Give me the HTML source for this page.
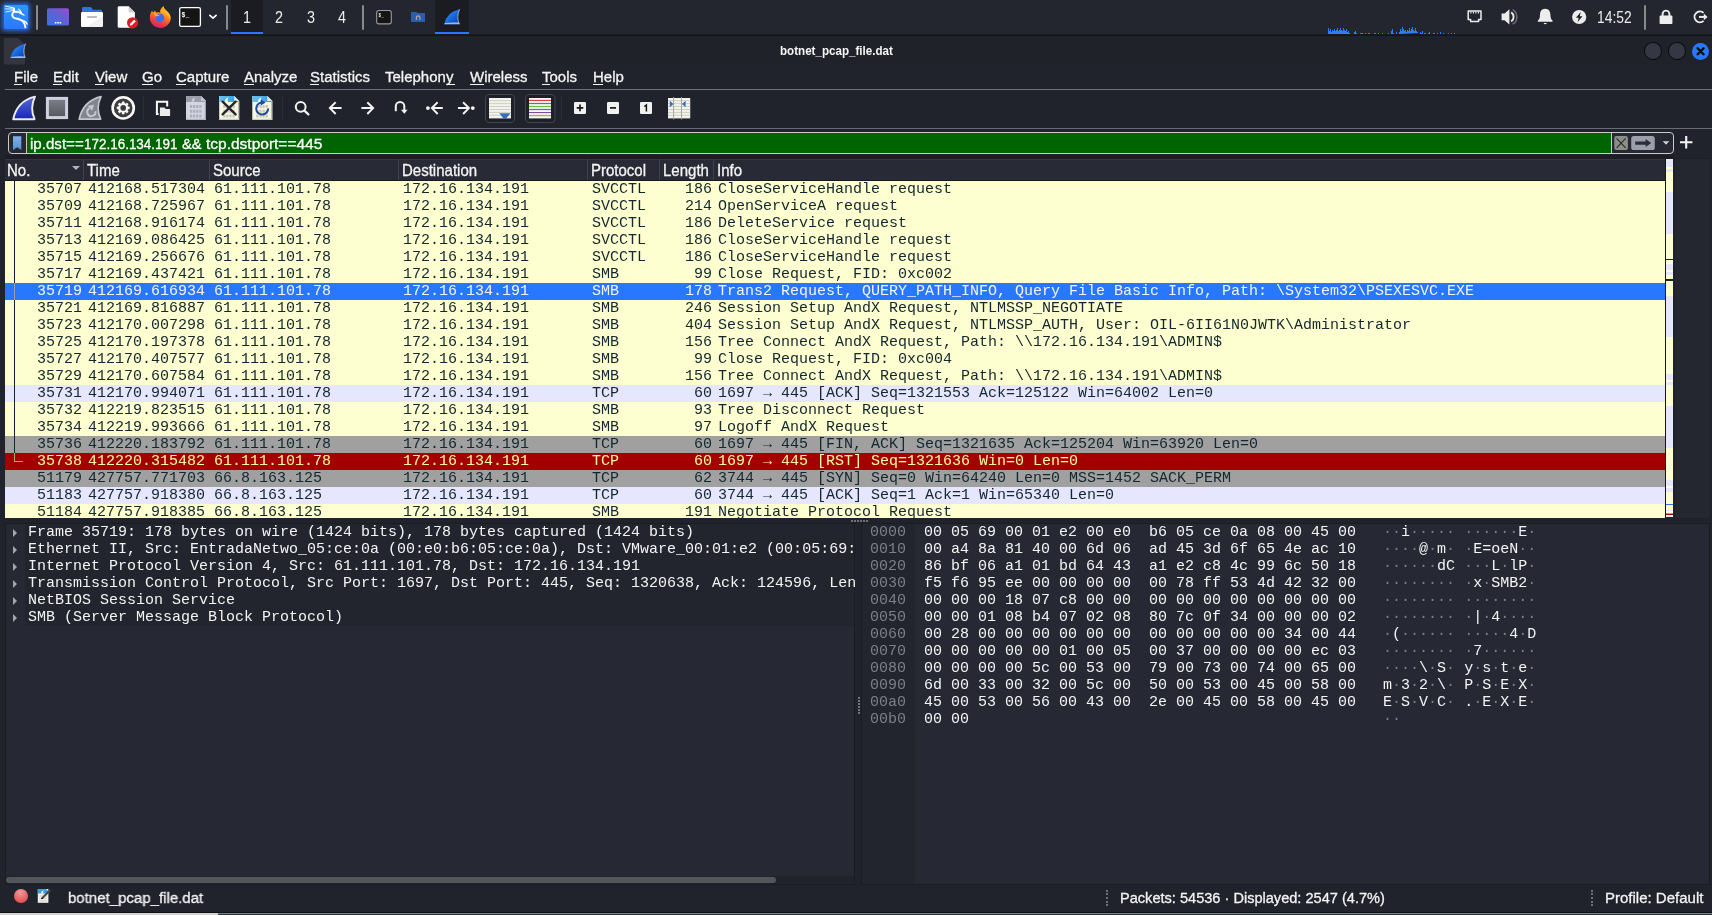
<!DOCTYPE html>
<html><head><meta charset="utf-8"><title>botnet_pcap_file.dat</title>
<style>
*{box-sizing:border-box}
html,body{margin:0;padding:0}
body{width:1712px;height:915px;position:relative;overflow:hidden;background:#21232c;
 font-family:"Liberation Sans",sans-serif;font-size:15px;color:#f2f2f2}
#root{position:absolute;left:0;top:0;width:1712px;height:915px;will-change:transform}
.abs{position:absolute}
svg{position:absolute;overflow:visible}
/* ---- top panel ---- */
#panel{position:absolute;left:0;top:0;width:1712px;height:35px;background:#24262f}
#panelline{position:absolute;left:0;top:34px;width:1712px;height:2px;background:linear-gradient(180deg,#1b1c22,#121318)}
.psep{position:absolute;top:5px;width:2px;height:25px;background:#8a8a8a;border-radius:1px}
.ws{position:absolute;top:8px;height:19px;line-height:19px;font-size:16.7px;color:#ececec;transform:scaleX(.86);transform-origin:0 0}
/* ---- title ---- */
#titlebar{position:absolute;left:0;top:36px;width:1712px;height:29px;background:#20222a}
#title{position:absolute;left:780px;top:8px;font-size:12.7px;font-weight:bold;color:#f6f6f6;line-height:14px;white-space:pre;transform:scaleX(.915);transform-origin:0 0}
/* ---- menubar ---- */
#menubar{position:absolute;left:0;top:65px;width:1712px;height:24px;background:#21232c}
.u{position:absolute;-webkit-text-stroke:.3px currentColor;font-size:15.5px;line-height:18px;height:18px;white-space:pre;color:#f4f4f4;transform:scaleX(.968);transform-origin:0 0}
#menubar .u{top:3px}
#menubar i{position:absolute;top:19px;height:1px;background:#f4f4f4}
#menuline{position:absolute;left:5px;top:89px;width:1707px;height:1px;background:#6e7078}
/* ---- toolbar ---- */
#toolbar{position:absolute;left:0;top:0;width:0;height:0}
#toolline{position:absolute;left:5px;top:128px;width:1707px;height:1px;background:#6a6c75}
/* ---- filter ---- */
#filter{position:absolute;left:8px;top:132px;width:1666px;height:22px;border:1px solid #c9c9c9;border-radius:4px;background:#262833;overflow:hidden}
#fgreen{position:absolute;left:18px;top:0;width:1584px;height:20px;background:#006400}
.ft{top:2px;color:#fff}
/* ---- packet list ---- */
#phead{position:absolute;left:5px;top:159px;width:1660px;height:22px;background:#282a35;box-shadow:inset 0 1px 0 #343641,inset 0 -1px 0 #181920}
#phead .u{top:3px;font-size:15.8px;transform:scaleX(.95)}
#prestrip{position:absolute;left:5px;top:155px;width:1669px;height:4px;background:#1d1e25}
#phead i{position:absolute;top:0;width:1px;height:21px;background:#40424d}
#plist{position:absolute;left:5px;top:181px;width:1660px;height:337px;overflow:hidden;background:#feffd0;
 font-family:"Liberation Mono",monospace;font-size:15px}
.row{position:absolute;left:0;width:1661px;height:17px;line-height:17px;white-space:pre;color:#12272e}
.row.y{background:#feffd0}
.row.l{background:#e7e6ff}
.row.g{background:#a0a0a0}
.row.r{background:#a40000;color:#fffc9c}
.row.s{background:#2777ff;color:#f4f4f4}
.c{position:absolute;top:0}
.no{left:0;width:77px;text-align:right}
.tm{left:83px}.sr{left:209px}.ds{left:398px}.pr{left:587px}
.ln{left:654px;width:53px;text-align:right}
.inf{left:713px}
#minimap{position:absolute;left:1666px;top:159px;width:7px;height:358px}
#mmline{position:absolute;left:1665px;top:159px;width:1px;height:359px;background:#14161c}
.sortarr{position:absolute;left:67px;top:7px;width:0;height:0;border-left:4px solid transparent;border-right:4px solid transparent;border-top:4.5px solid #b4b4b8}
/* ---- details ---- */
#details{position:absolute;left:5px;top:523px;width:850px;height:362px;background:#262833;box-shadow:inset 0 0 0 1px #1c1d24;overflow:hidden;
 font-family:"Liberation Mono",monospace;font-size:15px;color:#f4f4f4}
#dband{position:absolute;left:20px;top:1px;width:829px;height:102px;background:#22242e}
.drow{position:absolute;left:0;width:1000px;height:17px;line-height:17px;white-space:pre}
.drow span{position:absolute;left:23px;top:1px}
.tri{position:absolute;left:8px;top:5.7px;width:0;height:0;border-left:4.6px solid #a3a5ab;border-top:4px solid transparent;border-bottom:4px solid transparent}
#dtrack{position:absolute;left:1px;top:353px;width:848px;height:8px;background:#21232c}
#dscroll{position:absolute;left:1px;top:354px;width:770px;height:6px;border-radius:3px;background:#54555b}
/* ---- hex ---- */
#hex{position:absolute;left:861px;top:523px;width:849px;height:362px;background:#262833;box-shadow:inset 0 0 0 1px #1c1d24;overflow:hidden;
 font-family:"Liberation Mono",monospace;font-size:15px;color:#f4f4f4}
#hoffbg{position:absolute;left:1px;top:1px;width:53px;height:360px;background:#22242e}
.hrow{position:absolute;left:0;width:849px;height:17px;line-height:17px;white-space:pre}
.hrow span{position:absolute;top:1px}
.off{left:9px;color:#7d7f87}
.hx{left:63px}
.as{left:522px}
.as b{font-weight:normal;color:#7d7f87}
/* ---- status ---- */
#status{position:absolute;left:0;top:885px;width:1712px;height:27px}
#status .u{top:4px}
.dots{position:absolute;top:5px;width:0;height:16px;border-left:2px dotted #6d6f78}
#bottomstrip{position:absolute;left:0;top:912px;width:1712px;height:3px;background:#4b5659}

.hdots{position:absolute;left:851px;top:520px;width:17px;height:2px;background:repeating-linear-gradient(90deg,#70727a 0,#70727a 2px,transparent 2px,transparent 3px)}
.vdots{position:absolute;left:858px;top:697px;width:2px;height:17px;background:repeating-linear-gradient(180deg,#70727a 0,#70727a 2px,transparent 2px,transparent 3px)}
#rbox{position:absolute;left:1674px;top:158px;width:37px;height:361px;background:#242630;box-shadow:inset 0 0 0 1px #1e1f27}

</style></head>
<body><div id="root">
<div id="panel">
 <div class="abs" style="left:231px;top:0;width:32px;height:34px;background:#1b1c21"></div>
 <div class="abs" style="left:231px;top:32px;width:32px;height:2px;background:#2777ff"></div>
 <div class="abs" style="left:435px;top:0;width:34px;height:34px;background:#1b1c21"></div>
 <div class="abs" style="left:435px;top:32px;width:34px;height:2px;background:#2777ff"></div>
 <div class="abs" id="kali" style="left:4px;top:4.8px;width:24px;height:24px;border-radius:1.5px;background:linear-gradient(180deg,#2b98ff,#2a78ff);box-shadow:0 0 4px 2px rgba(39,119,255,.85)"></div>
 <div class="psep" style="left:36px"></div>
 <div class="psep" style="left:226px"></div>
 <div class="psep" style="left:362px"></div>
 <div class="ws" style="left:243px">1</div><div class="ws" style="left:274.5px">2</div>
 <div class="ws" style="left:306.5px">3</div><div class="ws" style="left:338px">4</div>
 <div class="abs" style="left:1597px;top:8.6px;height:18px;line-height:18px;font-size:16px;color:#ececec;white-space:pre;transform:scaleX(.865);transform-origin:0 0">14:52</div>
 <div class="psep" style="left:1644px;top:5px;height:25px"></div>
<svg style="left:0;top:0" width="1712" height="35" viewBox="0 0 1712 35">
<defs>
<linearGradient id="gdesk" x1="0" y1="1" x2="1" y2="0"><stop offset="0" stop-color="#3574e6"/><stop offset=".5" stop-color="#5b62d6"/><stop offset="1" stop-color="#9a4fc6"/></linearGradient>
<linearGradient id="gff" x1=".7" y1="0" x2=".3" y2="1"><stop offset="0" stop-color="#ffd43a"/><stop offset=".4" stop-color="#ff8a1e"/><stop offset=".75" stop-color="#f4383c"/><stop offset="1" stop-color="#d2207c"/></linearGradient>
<linearGradient id="gff2" x1="0" y1="0" x2="1" y2="1"><stop offset="0" stop-color="#ff9a1e"/><stop offset="1" stop-color="#ffcb30"/></linearGradient>
<linearGradient id="gglobe" x1="0" y1="0" x2="1" y2="1"><stop offset="0" stop-color="#7a54e0"/><stop offset=".5" stop-color="#3a6df0"/><stop offset="1" stop-color="#2c7cf4"/></linearGradient>
<linearGradient id="gwsf" x1="0" y1="0" x2="1" y2="1"><stop offset="0" stop-color="#3c9cf6"/><stop offset=".6" stop-color="#1560d8"/><stop offset="1" stop-color="#0a3aa4"/></linearGradient>
<linearGradient id="gfold" x1="0" y1="0" x2="1" y2="1"><stop offset="0" stop-color="#fff"/><stop offset=".62" stop-color="#fff"/><stop offset=".63" stop-color="#efefef"/><stop offset="1" stop-color="#f4f4f4"/></linearGradient>
</defs>
<!-- kali dragon -->
<g fill="#fff"><path d="M14.2,7.5 L4.6,5.5 L4.7,6.3 L13.8,8.5 Z"/><path d="M13.8,8.6 L4.8,8.5 L4.9,9.3 L13.7,9.5 Z"/><path d="M13.9,9.7 L5.3,11.7 L5.7,12.4 L14.3,10.6 Z"/>
<path d="M14,11.5 C16,10.3 19,10.7 21,12.3 L25.3,15.5 C23.4,15.9 21.6,15.1 20.4,14.1 C18.6,12.9 16.2,12.5 14.4,13.1 Z"/></g>
<g fill="none" stroke="#fff" stroke-linecap="round">
<path d="M13.9,8.6 C14.7,10.2 14.4,11.2 13.2,12.4 C11.2,14.6 12.2,17.6 15.4,18.4 C18.6,19 21.4,19.4 23.2,21.6 C24.6,23.4 25.2,25.4 25.4,27.4" stroke-width="1.9"/>
<path d="M22.6,20.6 C24.8,21 26.6,22.4 27.3,24.3" stroke-width="1.1"/>
<path d="M18.4,9.1 L20.2,10.6 L21.4,12.6" stroke-width="1.2"/>
</g>
<!-- show desktop -->
<rect x="47" y="8.3" width="22" height="17.3" rx="1.6" fill="url(#gdesk)"/>
<g fill="#fff"><rect x="54.8" y="22" width="1.6" height="1.5"/><rect x="57.2" y="22" width="1.6" height="1.5"/><rect x="59.6" y="22" width="1.6" height="1.5"/></g>
<!-- file manager -->
<path d="M82,8.4 Q82,7 83.4,7 H90.2 Q91.2,7 91.8,8 L92.8,9.8 H100.6 Q102,9.8 102,11.2 V14 H82 Z" fill="#2d74e2"/>
<rect x="81" y="12" width="22" height="15" rx="1.2" fill="url(#gfold)"/>
<rect x="86.8" y="16" width="10.4" height="2" rx="1" fill="#bdbdbd"/>
<!-- text editor -->
<path d="M119,6.2 H128.6 L134.9,12.6 V26.4 Q134.9,27.7 133.6,27.7 H119 Q117.7,27.7 117.7,26.4 V7.5 Q117.7,6.2 119,6.2 Z" fill="#fff"/>
<path d="M128.6,6.2 L134.9,12.6 H129.8 Q128.6,12.6 128.6,11.4 Z" fill="#cfcfcf"/>
<circle cx="132.6" cy="22.8" r="5.6" fill="#d81f26"/>
<path d="M129.9,25.6 L130.3,23.6 L134.2,19.7 L135.8,21.3 L131.9,25.2 Z" fill="#fff"/>
<!-- firefox -->
<path d="M160.2,27.9 C154.4,27.9 149.8,23.4 149.8,17.6 C149.8,14.6 150.8,12.2 152.2,10.6 C152.3,11.6 152.8,12.4 153.2,12.8 C153.6,11.6 154.4,10.8 155.2,10.4 C155.2,11.2 155.6,12 156.2,12.4 C158.2,12 160,12.4 160.4,12.6 C159.8,10.2 161.4,7.8 163.6,6.2 C163.6,8.4 165.4,9.6 167,11.2 C169.4,13.4 170.8,15.4 170.8,18 C170.6,23.6 166,27.9 160.2,27.9 Z" fill="url(#gff)"/>
<path d="M160.4,12.6 C159.8,10.2 161.4,7.8 163.6,6.2 C163.6,8.4 165.4,9.6 167,11.2 C169.6,13.6 170.6,16.4 170,19.6 C169.4,16.2 166.4,13 160.4,12.6 Z" fill="url(#gff2)" opacity=".9"/>
<circle cx="160" cy="17.9" r="4.3" fill="url(#gglobe)"/>
<path d="M152.8,12.4 C154.8,12.8 156.4,13.2 157.4,14.8 C158.2,15.2 159.6,15 160.2,14.6 C159.2,16.2 157.2,16.6 155.8,16 C154.6,15.2 153.6,14 152.8,12.4 Z" fill="#ffb52a"/>
<!-- terminal -->
<rect x="179.7" y="7.7" width="20.7" height="18.7" rx="1.6" fill="#141414" stroke="#fff" stroke-width="1.3"/>
<text transform="translate(181.6,16.7) scale(.8,1)" font-family="Liberation Mono" font-weight="bold" font-size="8" fill="#fff">$_</text>
<!-- chevron -->
<path d="M209.9,15.3 L213,18.2 L216.1,15.3" fill="none" stroke="#fff" stroke-width="1.7" stroke-linecap="round" stroke-linejoin="round"/>
<!-- small terminal -->
<rect x="376.7" y="10.5" width="14.6" height="13.4" rx="2.2" fill="#151515" stroke="#9c9c9c" stroke-width="1.1"/>
<text transform="translate(378.6,16.8) scale(.8,1)" font-family="Liberation Mono" font-weight="bold" font-size="5.4" fill="#eee">$_</text>
<!-- small folder -->
<path d="M411,12.6 Q411,12 411.6,12 H416.6 L417.6,13 H424.4 Q425,13 425,13.6 V21.4 Q425,22 424.4,22 H411.6 Q411,22 411,21.4 Z" fill="#2c5cac"/>
<path d="M415.8,20 V17.6 A2.4,2.4 0 0 1 420.6,17.6 V20 H419.3 V17.8 A1.1,1.1 0 0 0 417.1,17.8 V20 Z" fill="#a8a29c"/>
<!-- wireshark task -->
<path d="M444.2,24.2 Q446.6,12 459.6,9.2 Q456,17 459.4,24.2 Z" fill="url(#gwsf)"/>
<path d="M444.2,24.2 L459.4,24.2 L458.9,22.6 Q451,22.2 445,23 Z" fill="#9ecbf6" opacity=".9"/>
<path d="M459.6,9.2 Q456,17 459.4,24.2" fill="none" stroke="#c7d5ea" stroke-width=".7"/>
<!-- tray: network -->
<path d="M1468.2,11 H1481 V19.6 H1478.6 V21.6 H1470.6 V19.6 H1468.2 Z" fill="none" stroke="#ededed" stroke-width="1.5" stroke-linejoin="round"/>
<path d="M1470.9,11.6 V13.6 M1473.4,11.6 V13.6 M1475.9,11.6 V13.6 M1478.4,11.6 V13.6" stroke="#ededed" stroke-width="1.1"/>
<!-- speaker -->
<path d="M1501.6,13.6 H1504.6 L1509.4,9.2 V24.6 L1504.6,20.2 H1501.6 Z" fill="#ededed"/>
<path d="M1511.2,12.4 A5.4,5.4 0 0 1 1511.2,21.4" fill="none" stroke="#ededed" stroke-width="1.9"/>
<path d="M1512.6,9.6 A8.4,8.4 0 0 1 1512.6,24.2" fill="none" stroke="#6d6f78" stroke-width="1.5"/>
<!-- bell -->
<path d="M1545.2,8.8 C1548.8,8.8 1550.4,11.6 1550.4,14.6 C1550.4,18.4 1551.4,19.8 1552.6,20.8 V21.8 H1537.8 V20.8 C1539,19.8 1540,18.4 1540,14.6 C1540,11.6 1541.6,8.8 1545.2,8.8 Z" fill="#ededed"/>
<path d="M1543.6,23 H1546.8 Q1546.6,24.3 1545.2,24.3 Q1543.8,24.3 1543.6,23 Z" fill="#ededed"/>
<!-- power -->
<circle cx="1579.2" cy="17" r="7.1" fill="#ededed"/>
<path d="M1580.8,12 L1575.9,17.7 H1578.7 L1577.6,22 L1582.5,16.3 H1579.7 Z" fill="#1c1e25"/>
<!-- lock -->
<path d="M1662.6,16 V14 A3.4,3.4 0 0 1 1669.4,14 V16" fill="none" stroke="#ededed" stroke-width="1.9"/>
<rect x="1659.6" y="15.6" width="12.8" height="8.4" rx=".8" fill="#ededed"/>
<!-- logout -->
<path d="M1703.6,12.9 A5.4,5.4 0 1 0 1703.6,20.9" fill="none" stroke="#ededed" stroke-width="1.9"/>
<path d="M1699,16.9 H1704.6" stroke="#ededed" stroke-width="2"/>
<path d="M1703.8,13.6 L1707.6,16.9 L1703.8,20.2 Z" fill="#ededed"/>
</svg>
<!-- net graph -->
<svg style="left:1327px;top:26px" width="130" height="8" viewBox="0 0 130 8">
<path fill="#2d7df6" d="M1,8V2h1v3h1v-2h1v3h1v-2h1v1h1v-2h1v2h1v-1h1v-2h1v3h1v-1h1v-2h1v2h1v1h1v-3h1v2h1v1h1v-2h1v3h1v-1h1v2h1v1h-22z M27,8v-2h1v-1h1v2h1v1z M33,8v-1h3v1z M38,8v-1h1v1z M41,8v-1h2v1z M47,8v-1h2v1z M51,8v-1h1v1z M55,8v-1h1v1z M61,8v-1h1v1z M64,8v-3h1v-2h1v4h1v1z M69,8v-2h1v2z M72,8v-2h1v-3h1v2h1v-4h1v2h1v2h1v-1h1v2h1v-2h1v1h1v-3h1v3h1v-2h1v-2h1v3h1v1h1v-3h1v3h1v1h1v1z M93,8v-2h1v1h1v-2h1v3z M97,8v-1h2v1z M101,8v-1h1v-1h1v2z M106,8v-1h2v1z M110,8v-1h1v1z M113,8v-2h1v2z M116,8v-1h1v1z M121,8v-1h1v1z M124,8v-1h1v1z M127,8v-1h1v1z"/>
</svg>
</div>
<div id="panelline"></div>

<div id="titlebar">
<svg style="left:0;top:0" width="40" height="29" viewBox="0 36 40 29"><defs><linearGradient id="gwsf2" x1="0" y1="0" x2="1" y2="1"><stop offset="0" stop-color="#3c9cf6"/><stop offset=".6" stop-color="#1560d8"/><stop offset="1" stop-color="#0a3aa4"/></linearGradient></defs>
<path d="M5.2,38 H18 L25,45 V63 Q25,64.4 23.6,64.4 H5.2 Q3.8,64.4 3.8,63 V39.4 Q3.8,38 5.2,38 Z" fill="#34353e"/>
<path d="M10.4,58 Q12.6,46.4 25.6,43.6 Q22.2,51 25.2,58 Z" fill="url(#gwsf2)"/>
<path d="M10.4,58 L25.2,58 L24.8,56.5 Q17,56.1 11.2,56.9 Z" fill="#a6cff8" opacity=".9"/>
<path d="M25.6,43.6 Q22.2,51 25.2,58" fill="none" stroke="#c7d5ea" stroke-width=".7"/>
</svg>
 <div id="title">botnet_pcap_file.dat</div>
 <div class="abs" style="left:1644.2px;top:6.1px;width:17.6px;height:17.6px;border-radius:50%;background:#353744;border:1.5px solid #060709"></div>
 <div class="abs" style="left:1668.2px;top:6.1px;width:17.6px;height:17.6px;border-radius:50%;background:#353744;border:1.5px solid #060709"></div>
 <div class="abs" style="left:1691.8px;top:6.5px;width:17.3px;height:17.3px;border-radius:50%;background:#2777ff"></div>
 <svg style="left:1696.1px;top:11.1px" width="9" height="9" viewBox="0 0 9 9"><path d="M1.6,1.3 L7.6,7.3 M7.6,1.3 L1.6,7.3" stroke="#07080a" stroke-width="2.3" stroke-linecap="round"/></svg>
</div>

<div id="menubar">
<span class="u" style="left:14px">File</span><span class="u" style="left:53px">Edit</span><span class="u" style="left:95px">View</span><span class="u" style="left:142px">Go</span><span class="u" style="left:176px">Capture</span><span class="u" style="left:244px">Analyze</span><span class="u" style="left:310px">Statistics</span><span class="u" style="left:385px">Telephony</span><span class="u" style="left:470px">Wireless</span><span class="u" style="left:542px">Tools</span><span class="u" style="left:593px">Help</span>
<i style="left:14px;width:8px"></i><i style="left:53px;width:9px"></i><i style="left:95px;width:9px"></i><i style="left:142px;width:11px"></i><i style="left:176px;width:10px"></i><i style="left:244px;width:10px"></i><i style="left:310px;width:9px"></i><i style="left:447px;width:8px"></i><i style="left:470px;width:14px"></i><i style="left:542px;width:8px"></i><i style="left:593px;width:10px"></i>
</div>
<div id="menuline"></div>

<div id="toolbar">
<svg style="left:0;top:0" width="1712" height="130" viewBox="0 0 1712 130">
<defs>
<linearGradient id="gfin" x1="0" y1="0" x2="0" y2="1"><stop offset="0" stop-color="#5468d4"/><stop offset="1" stop-color="#1a28b4"/></linearGradient>
<linearGradient id="gstop" x1="0" y1="0" x2="0" y2="1"><stop offset="0" stop-color="#7e808c"/><stop offset="1" stop-color="#54565e"/></linearGradient>
<linearGradient id="ghdr" x1="0" y1="0" x2="1" y2="0"><stop offset="0" stop-color="#6cc0f0"/><stop offset="1" stop-color="#2a9ae0"/></linearGradient>
</defs>
<!-- 1 start capture fin -->
<path d="M13.2,119.2 Q17,101 35,96.6 Q29.5,108 34.6,119.2 Z" fill="url(#gfin)" stroke="#ececf0" stroke-width="1.9" stroke-linejoin="round"/>
<!-- 2 stop -->
<rect x="47.4" y="98.4" width="19.2" height="19.2" fill="url(#gstop)" stroke="#cfd1de" stroke-width="3"/>
<!-- 3 restart fin -->
<path d="M79.2,119.2 Q83,101 101,96.6 Q95.5,108 100.6,119.2 Z" fill="#82848e" stroke="#c2c4ce" stroke-width="1.7" stroke-linejoin="round"/>
<path d="M89.4,108.4 A4.1,4.1 0 1 0 95.4,111.2" fill="none" stroke="#c6c8d2" stroke-width="2"/>
<path d="M87.6,106 L94,104.8 L92.2,110.8 Z" fill="#c6c8d2"/>
<!-- 4 options gear -->
<circle cx="123.2" cy="107.9" r="10.6" fill="#3e3e3e" stroke="#fafafa" stroke-width="2.6"/>
<g fill="#fafafa"><circle cx="123.2" cy="107.9" r="4.9"/>
<g id="teeth"><rect x="121.9" y="101.5" width="2.6" height="12.8" rx=".6"/><rect x="121.9" y="101.5" width="2.6" height="12.8" rx=".6" transform="rotate(45 123.2 107.9)"/><rect x="121.9" y="101.5" width="2.6" height="12.8" rx=".6" transform="rotate(90 123.2 107.9)"/><rect x="121.9" y="101.5" width="2.6" height="12.8" rx=".6" transform="rotate(135 123.2 107.9)"/></g></g>
<circle cx="123.2" cy="107.9" r="2.8" fill="#3a3a3a"/>
<!-- sep -->
<rect x="143" y="96" width="1" height="24" fill="#2b2d37"/>
<!-- 5 open/copy folder -->
<path d="M167.2,106.4 V101.7 H156.9 V113.9 H158.6" fill="none" stroke="#fbfbfb" stroke-width="2"/>
<path d="M159.9,107.6 H164.4 L165.9,109.1 H170.1 V116.1 H159.9 Z" fill="#ececec"/>
<!-- 6 save (disabled gray file) -->
<path d="M186,96 H201 L206,101 V119.8 H186 Z" fill="#d3d5e2"/>
<path d="M186,96 H201 L206,101 V102 H186 Z" fill="#9b9da9"/>
<path d="M201,96 L206,101 H201 Z" fill="#c3c5d0"/>
<path d="M191.5,101.5 Q192,98 195,97.4 Q193.8,99.5 194.6,101.8 Z" fill="#c9cbd6"/>
<g stroke="#a3a5b2" stroke-width="3" stroke-dasharray="2.2 .9" opacity=".8"><path d="M190,106.5 H202 M190,111.2 H202 M190,115.9 H202"/></g>
<rect x="204.8" y="101" width="1.2" height="18.8" fill="#9fa1ad"/><rect x="186" y="118.8" width="20" height="1" fill="#b6b8c4"/>
<!-- 7 close file -->
<path d="M219.2,96 H234.2 L239.2,101 V119.8 H219.2 Z" fill="#f6f6e4"/>
<path d="M219.2,96 H234.2 L239.2,101 V102 H219.2 Z" fill="url(#ghdr)"/>
<path d="M234.2,96 L239.2,101 H234.2 Z" fill="#e9e9dc"/>
<path d="M224.7,101.8 Q225.2,98 228.4,97.4 Q227,99.6 227.8,102 Z" fill="#fff"/>
<g stroke="#b4b4a4" stroke-width="3" stroke-dasharray="2.2 .9" opacity=".7"><path d="M223.2,106.5 H235.2 M223.2,111.2 H235.2 M223.2,115.9 H235.2"/></g>
<rect x="238" y="101" width="1.2" height="18.8" fill="#b9b9a6"/><rect x="219.2" y="118.8" width="20" height="1" fill="#d0d0bc"/>
<path d="M222.6,101.6 L235.6,114.4 M235.6,101.6 L222.6,114.4" stroke="#23252b" stroke-width="2.3" stroke-linecap="round"/>
<!-- 8 reload file -->
<path d="M252.3,96 H267.3 L272.3,101 V119.8 H252.3 Z" fill="#f6f6e4"/>
<path d="M252.3,96 H267.3 L272.3,101 V102 H252.3 Z" fill="url(#ghdr)"/>
<path d="M267.3,96 L272.3,101 H267.3 Z" fill="#e9e9dc"/>
<path d="M257.8,101.8 Q258.3,98 261.5,97.4 Q260.1,99.6 260.9,102 Z" fill="#fff"/>
<g stroke="#b4b4a4" stroke-width="3" stroke-dasharray="2.2 .9" opacity=".7"><path d="M256.3,106.5 H268.3 M256.3,111.2 H268.3 M256.3,115.9 H268.3"/></g>
<rect x="271.1" y="101" width="1.2" height="18.8" fill="#b9b9a6"/><rect x="252.3" y="118.8" width="20" height="1" fill="#d0d0bc"/>
<path d="M268.2,108.6 A6,6 0 1 1 261.6,102.6" fill="none" stroke="#1d4a9c" stroke-width="2"/>
<path d="M260.8,99.6 L265.6,102.4 L260.8,105.4 Z" fill="#1d4a9c"/>
<!-- sep -->
<rect x="282" y="96" width="1" height="24" fill="#2b2d37"/>
<!-- 9 find -->
<circle cx="300.7" cy="106.8" r="4.9" fill="none" stroke="#f3f3f3" stroke-width="2"/>
<path d="M304.4,110.6 L308.4,114.4" stroke="#f3f3f3" stroke-width="2.2" stroke-linecap="round"/>
<!-- 10 back -->
<path d="M340.6,108.1 H330.8 M335,102.9 L329.9,108.1 L335,113.3" fill="none" stroke="#f3f3f3" stroke-width="2" stroke-linecap="square" stroke-linejoin="miter"/>
<!-- 11 forward -->
<path d="M362.4,108.1 H372.2 M368,102.9 L373.1,108.1 L368,113.3" fill="none" stroke="#f3f3f3" stroke-width="2" stroke-linecap="square"/>
<!-- 12 goto -->
<path d="M395.8,111.2 V106.3 A4.25,4.25 0 0 1 404.3,106.3 V110.6" fill="none" stroke="#f3f3f3" stroke-width="2"/>
<path d="M401,109.8 H407.6 L404.3,113.8 Z" fill="#f3f3f3"/>
<!-- 13 first -->
<circle cx="427.9" cy="108.1" r="1.9" fill="#f3f3f3"/>
<path d="M441.8,108.1 H432.8 M437,102.9 L431.9,108.1 L437,113.3" fill="none" stroke="#f3f3f3" stroke-width="2" stroke-linecap="square"/>
<!-- 14 last -->
<circle cx="472.8" cy="108.1" r="1.9" fill="#f3f3f3"/>
<path d="M459,108.1 H468 M463.8,102.9 L468.9,108.1 L463.8,113.3" fill="none" stroke="#f3f3f3" stroke-width="2" stroke-linecap="square"/>
<!-- 15 autoscroll (checked) -->
<rect x="485.5" y="94.5" width="29" height="28" rx="3.5" fill="#1e2028" stroke="#41434e"/>
<rect x="489" y="98" width="22" height="20.4" fill="#f3f3ee"/>
<g fill="#c9c9bb"><rect x="489" y="100.3" width="22" height=".9"/><rect x="489" y="103.2" width="22" height=".9"/><rect x="489" y="106.1" width="22" height=".9"/><rect x="489" y="109" width="22" height=".9"/><rect x="489" y="111.9" width="22" height=".9"/><rect x="489" y="114.8" width="22" height=".9"/></g>
<path d="M499.2,113.2 H510.4 L506.4,118.2 Q504.8,119.6 503.2,118.2 Z" fill="#3a6fb8"/>
<!-- 16 colorize (checked) -->
<rect x="525.5" y="94.5" width="29.5" height="28" rx="3.5" fill="#1e2028" stroke="#41434e"/>
<rect x="529" y="98" width="22" height="20.4" fill="#f7f7f3"/>
<rect x="529" y="99.9" width="22" height="1.1" fill="#e5383b"/><rect x="529" y="102.9" width="22" height="1.2" fill="#3f78c8"/><rect x="529" y="105.9" width="22" height="1.2" fill="#6cc428"/><rect x="529" y="108.9" width="22" height="1.2" fill="#3f78c8"/><rect x="529" y="112" width="22" height="1.1" fill="#7a4f9c"/><rect x="529" y="114.9" width="22" height="1.3" fill="#c9a31c"/>
<!-- sep -->
<rect x="561" y="96" width="1" height="24" fill="#2b2d37"/>
<!-- 18 zoom in -->
<rect x="574" y="101.9" width="12" height="12" rx="1.2" fill="#f1f1ee"/>
<path d="M580,104.6 V111.2 M576.7,107.9 H583.3" stroke="#16171c" stroke-width="1.7"/>
<!-- 19 zoom out -->
<rect x="607" y="101.9" width="12" height="12" rx="1.2" fill="#f1f1ee"/>
<path d="M610,107.9 H616" stroke="#16171c" stroke-width="1.7"/>
<!-- 20 1:1 -->
<rect x="640" y="101.9" width="12" height="12" rx="1.2" fill="#f1f1ee"/>
<path d="M644.4,106.6 L646.4,105 V111.4" fill="none" stroke="#16171c" stroke-width="1.5"/>
<!-- 21 resize columns -->
<rect x="668" y="98" width="22.2" height="20.4" fill="#f3f3ee"/>
<g fill="#c9c9bb"><rect x="668" y="100.3" width="22.2" height=".9"/><rect x="668" y="103.2" width="22.2" height=".9"/><rect x="668" y="106.1" width="22.2" height=".9"/><rect x="668" y="109" width="22.2" height=".9"/><rect x="668" y="111.9" width="22.2" height=".9"/><rect x="668" y="114.8" width="22.2" height=".9"/></g>
<rect x="673.1" y="97" width="1" height="22.4" fill="#a9a99c"/><rect x="681" y="97" width="1" height="22.4" fill="#a9a99c"/>
<path d="M669.8,100.8 L673.4,104 L669.8,107.2 Z M685.6,100.8 L682,104 L685.6,107.2 Z" fill="#3a6fb8"/>
</svg>
</div>
<div id="toolline"></div>

<div id="filter"><div id="fgreen"></div><div class="abs" style="left:17px;top:0;width:1px;height:21px;background:#c9c9c9"></div><div class="abs" style="left:1602px;top:0;width:1px;height:21px;background:#c9c9c9"></div>
<svg style="left:0;top:0" width="1665" height="21" viewBox="0 0 1665 21"><defs><linearGradient id="gbm" x1="0" y1="0" x2="0" y2="1"><stop offset="0" stop-color="#7fb0ea"/><stop offset="1" stop-color="#5a8fd6"/></linearGradient></defs>
<path d="M4,3.3 H12.3 V17 L8.15,14.2 L4,17 Z" fill="url(#gbm)"/>
<rect x="1605.3" y="3.1" width="13.6" height="14" rx="2" fill="#8e8e86"/>
<path d="M1607.6,5.4 L1616.6,14.8 M1616.6,5.4 L1607.6,14.8" stroke="#2a2c36" stroke-width="1.2"/>
<rect x="1622.2" y="3.1" width="23.6" height="14" rx="2.6" fill="#9c9eab"/>
<path d="M1626.2,8.5 H1636.6 V6.1 L1642.2,10.1 L1636.6,14.1 V11.7 H1626.2 Z" fill="#2a2c38"/>
<path d="M1653.7,8.2 H1660.3 L1657,11.8 Z" fill="#d6d6d6"/>
</svg><div class="u ft" style="left:21px;transform:scaleX(.975)">ip.dst==</div><div class="u ft" style="left:74.6px;transform:scaleX(.868)">172.16.134.191</div><div class="u ft" style="left:172.6px;transform:scaleX(.95)">&amp;&amp;</div><div class="u ft" style="left:197px;transform:scaleX(1)">tcp.dstport==445</div></div>
<svg style="left:1680px;top:136px" width="13" height="13" viewBox="0 0 13 13"><path d="M6.2,0 V12.4 M0,6.2 H12.4" stroke="#f6f6f6" stroke-width="2.1"/></svg>
<div id="prestrip"></div><div id="rbox"></div>
<div id="phead">
<span class="u" style="left:2px">No.</span><span class="u" style="left:82px">Time</span><span class="u" style="left:208px">Source</span><span class="u" style="left:397px">Destination</span><span class="u" style="left:586px">Protocol</span><span class="u" style="left:658px">Length</span><span class="u" style="left:712px">Info</span>
<b class="sortarr"></b><i style="left:78px"></i><i style="left:204px"></i><i style="left:393px"></i><i style="left:582px"></i><i style="left:654px"></i><i style="left:708px"></i>
</div>
<div id="mmline"></div><div id="minimap" style="background:linear-gradient(180deg,#e7e6ff 0.0px,#e7e6ff 7.7px,#feffd0 7.7px,#feffd0 9.7px,#e7e6ff 9.7px,#e7e6ff 12.6px,#feffd0 12.6px,#feffd0 32.8px,#e7e6ff 32.8px,#e7e6ff 74.9px,#feffd0 74.9px,#feffd0 99.6px,#12272e 99.6px,#12272e 100.7px,#feffd0 100.7px,#feffd0 105.0px,#e7e6ff 105.0px,#e7e6ff 111.0px,#feffd0 111.0px,#feffd0 113.0px,#e7e6ff 113.0px,#e7e6ff 115.7px,#feffd0 115.7px,#feffd0 120.0px,#12272e 120.0px,#12272e 122.0px,#feffd0 122.0px,#feffd0 137.0px,#e7e6ff 137.0px,#e7e6ff 178.4px,#feffd0 178.4px,#feffd0 215.4px,#e7e6ff 215.4px,#e7e6ff 221.0px,#feffd0 221.0px,#feffd0 223.5px,#e7e6ff 223.5px,#e7e6ff 226.5px,#feffd0 226.5px,#feffd0 247.0px,#e7e6ff 247.0px,#e7e6ff 288.8px,#feffd0 288.8px,#feffd0 321.0px,#e7e6ff 321.0px,#e7e6ff 326.8px,#feffd0 326.8px,#feffd0 329.0px,#e7e6ff 329.0px,#e7e6ff 333.0px,#feffd0 333.0px,#feffd0 344.8px,#2777ff 344.8px,#2777ff 346.0px,#feffd0 346.0px,#feffd0 351.2px,#e7e6ff 351.2px,#e7e6ff 352.0px,#feffd0 352.0px,#feffd0 354.2px,#a0a0a0 354.2px,#a0a0a0 354.8px,#a40000 354.8px,#a40000 356.0px,#efeefc 356.0px,#efeefc 358.0px)"></div>

<div id="plist">
<div class="row y" style="top:0px"><span class="c no">35707</span><span class="c tm">412168.517304</span><span class="c sr">61.111.101.78</span><span class="c ds">172.16.134.191</span><span class="c pr">SVCCTL</span><span class="c ln">186</span><span class="c inf">CloseServiceHandle request</span></div>
<div class="row y" style="top:17px"><span class="c no">35709</span><span class="c tm">412168.725967</span><span class="c sr">61.111.101.78</span><span class="c ds">172.16.134.191</span><span class="c pr">SVCCTL</span><span class="c ln">214</span><span class="c inf">OpenServiceA request</span></div>
<div class="row y" style="top:34px"><span class="c no">35711</span><span class="c tm">412168.916174</span><span class="c sr">61.111.101.78</span><span class="c ds">172.16.134.191</span><span class="c pr">SVCCTL</span><span class="c ln">186</span><span class="c inf">DeleteService request</span></div>
<div class="row y" style="top:51px"><span class="c no">35713</span><span class="c tm">412169.086425</span><span class="c sr">61.111.101.78</span><span class="c ds">172.16.134.191</span><span class="c pr">SVCCTL</span><span class="c ln">186</span><span class="c inf">CloseServiceHandle request</span></div>
<div class="row y" style="top:68px"><span class="c no">35715</span><span class="c tm">412169.256676</span><span class="c sr">61.111.101.78</span><span class="c ds">172.16.134.191</span><span class="c pr">SVCCTL</span><span class="c ln">186</span><span class="c inf">CloseServiceHandle request</span></div>
<div class="row y" style="top:85px"><span class="c no">35717</span><span class="c tm">412169.437421</span><span class="c sr">61.111.101.78</span><span class="c ds">172.16.134.191</span><span class="c pr">SMB</span><span class="c ln">99</span><span class="c inf">Close Request, FID: 0xc002</span></div>
<div class="row s" style="top:102px"><span class="c no">35719</span><span class="c tm">412169.616934</span><span class="c sr">61.111.101.78</span><span class="c ds">172.16.134.191</span><span class="c pr">SMB</span><span class="c ln">178</span><span class="c inf">Trans2 Request, QUERY_PATH_INFO, Query File Basic Info, Path: \System32\PSEXESVC.EXE</span></div>
<div class="row y" style="top:119px"><span class="c no">35721</span><span class="c tm">412169.816887</span><span class="c sr">61.111.101.78</span><span class="c ds">172.16.134.191</span><span class="c pr">SMB</span><span class="c ln">246</span><span class="c inf">Session Setup AndX Request, NTLMSSP_NEGOTIATE</span></div>
<div class="row y" style="top:136px"><span class="c no">35723</span><span class="c tm">412170.007298</span><span class="c sr">61.111.101.78</span><span class="c ds">172.16.134.191</span><span class="c pr">SMB</span><span class="c ln">404</span><span class="c inf">Session Setup AndX Request, NTLMSSP_AUTH, User: OIL-6II61N0JWTK\Administrator</span></div>
<div class="row y" style="top:153px"><span class="c no">35725</span><span class="c tm">412170.197378</span><span class="c sr">61.111.101.78</span><span class="c ds">172.16.134.191</span><span class="c pr">SMB</span><span class="c ln">156</span><span class="c inf">Tree Connect AndX Request, Path: \\172.16.134.191\ADMIN$</span></div>
<div class="row y" style="top:170px"><span class="c no">35727</span><span class="c tm">412170.407577</span><span class="c sr">61.111.101.78</span><span class="c ds">172.16.134.191</span><span class="c pr">SMB</span><span class="c ln">99</span><span class="c inf">Close Request, FID: 0xc004</span></div>
<div class="row y" style="top:187px"><span class="c no">35729</span><span class="c tm">412170.607584</span><span class="c sr">61.111.101.78</span><span class="c ds">172.16.134.191</span><span class="c pr">SMB</span><span class="c ln">156</span><span class="c inf">Tree Connect AndX Request, Path: \\172.16.134.191\ADMIN$</span></div>
<div class="row l" style="top:204px"><span class="c no">35731</span><span class="c tm">412170.994071</span><span class="c sr">61.111.101.78</span><span class="c ds">172.16.134.191</span><span class="c pr">TCP</span><span class="c ln">60</span><span class="c inf">1697 → 445 [ACK] Seq=1321553 Ack=125122 Win=64002 Len=0</span></div>
<div class="row y" style="top:221px"><span class="c no">35732</span><span class="c tm">412219.823515</span><span class="c sr">61.111.101.78</span><span class="c ds">172.16.134.191</span><span class="c pr">SMB</span><span class="c ln">93</span><span class="c inf">Tree Disconnect Request</span></div>
<div class="row y" style="top:238px"><span class="c no">35734</span><span class="c tm">412219.993666</span><span class="c sr">61.111.101.78</span><span class="c ds">172.16.134.191</span><span class="c pr">SMB</span><span class="c ln">97</span><span class="c inf">Logoff AndX Request</span></div>
<div class="row g" style="top:255px"><span class="c no">35736</span><span class="c tm">412220.183792</span><span class="c sr">61.111.101.78</span><span class="c ds">172.16.134.191</span><span class="c pr">TCP</span><span class="c ln">60</span><span class="c inf">1697 → 445 [FIN, ACK] Seq=1321635 Ack=125204 Win=63920 Len=0</span></div>
<div class="row r" style="top:272px"><span class="c no">35738</span><span class="c tm">412220.315482</span><span class="c sr">61.111.101.78</span><span class="c ds">172.16.134.191</span><span class="c pr">TCP</span><span class="c ln">60</span><span class="c inf">1697 → 445 [RST] Seq=1321636 Win=0 Len=0</span></div>
<div class="row g" style="top:289px"><span class="c no">51179</span><span class="c tm">427757.771703</span><span class="c sr">66.8.163.125</span><span class="c ds">172.16.134.191</span><span class="c pr">TCP</span><span class="c ln">62</span><span class="c inf">3744 → 445 [SYN] Seq=0 Win=64240 Len=0 MSS=1452 SACK_PERM</span></div>
<div class="row l" style="top:306px"><span class="c no">51183</span><span class="c tm">427757.918380</span><span class="c sr">66.8.163.125</span><span class="c ds">172.16.134.191</span><span class="c pr">TCP</span><span class="c ln">60</span><span class="c inf">3744 → 445 [ACK] Seq=1 Ack=1 Win=65340 Len=0</span></div>
<div class="row y" style="top:323px"><span class="c no">51184</span><span class="c tm">427757.918385</span><span class="c sr">66.8.163.125</span><span class="c ds">172.16.134.191</span><span class="c pr">SMB</span><span class="c ln">191</span><span class="c inf">Negotiate Protocol Request</span></div>
<div class="abs" style="left:9px;top:0;width:1px;height:272px;background:#12272e"></div>
<div class="abs" style="left:9px;top:102px;width:1px;height:17px;background:#9a9ea6"></div>
<div class="abs" style="left:9px;top:272px;width:1px;height:9px;background:#b3aa68"></div>
<div class="abs" style="left:9px;top:280px;width:9px;height:1px;background:#b3aa68"></div>

</div>
<div id="details"><div id="dband"></div>
<div class="drow" style="top:0px"><i class="tri"></i><span>Frame 35719: 178 bytes on wire (1424 bits), 178 bytes captured (1424 bits)</span></div>
<div class="drow" style="top:17px"><i class="tri"></i><span>Ethernet II, Src: EntradaNetwo_05:ce:0a (00:e0:b6:05:ce:0a), Dst: VMware_00:01:e2 (00:05:69:00:01:e2)</span></div>
<div class="drow" style="top:34px"><i class="tri"></i><span>Internet Protocol Version 4, Src: 61.111.101.78, Dst: 172.16.134.191</span></div>
<div class="drow" style="top:51px"><i class="tri"></i><span>Transmission Control Protocol, Src Port: 1697, Dst Port: 445, Seq: 1320638, Ack: 124596, Len: 124</span></div>
<div class="drow" style="top:68px"><i class="tri"></i><span>NetBIOS Session Service</span></div>
<div class="drow" style="top:85px"><i class="tri"></i><span>SMB (Server Message Block Protocol)</span></div>
<div id="dtrack"></div><div id="dscroll"></div></div>
<div id="hex"><div id="hoffbg"></div>
<div class="hrow" style="top:0px"><span class="off">0000</span><span class="hx">00 05 69 00 01 e2 00 e0  b6 05 ce 0a 08 00 45 00</span><span class="as"><b>·</b><b>·</b>i<b>·</b><b>·</b><b>·</b><b>·</b><b>·</b> <b>·</b><b>·</b><b>·</b><b>·</b><b>·</b><b>·</b>E<b>·</b></span></div>
<div class="hrow" style="top:17px"><span class="off">0010</span><span class="hx">00 a4 8a 81 40 00 6d 06  ad 45 3d 6f 65 4e ac 10</span><span class="as"><b>·</b><b>·</b><b>·</b><b>·</b>@<b>·</b>m<b>·</b> <b>·</b>E=oeN<b>·</b><b>·</b></span></div>
<div class="hrow" style="top:34px"><span class="off">0020</span><span class="hx">86 bf 06 a1 01 bd 64 43  a1 e2 c8 4c 99 6c 50 18</span><span class="as"><b>·</b><b>·</b><b>·</b><b>·</b><b>·</b><b>·</b>dC <b>·</b><b>·</b><b>·</b>L<b>·</b>lP<b>·</b></span></div>
<div class="hrow" style="top:51px"><span class="off">0030</span><span class="hx">f5 f6 95 ee 00 00 00 00  00 78 ff 53 4d 42 32 00</span><span class="as"><b>·</b><b>·</b><b>·</b><b>·</b><b>·</b><b>·</b><b>·</b><b>·</b> <b>·</b>x<b>·</b>SMB2<b>·</b></span></div>
<div class="hrow" style="top:68px"><span class="off">0040</span><span class="hx">00 00 00 18 07 c8 00 00  00 00 00 00 00 00 00 00</span><span class="as"><b>·</b><b>·</b><b>·</b><b>·</b><b>·</b><b>·</b><b>·</b><b>·</b> <b>·</b><b>·</b><b>·</b><b>·</b><b>·</b><b>·</b><b>·</b><b>·</b></span></div>
<div class="hrow" style="top:85px"><span class="off">0050</span><span class="hx">00 00 01 08 b4 07 02 08  80 7c 0f 34 00 00 00 02</span><span class="as"><b>·</b><b>·</b><b>·</b><b>·</b><b>·</b><b>·</b><b>·</b><b>·</b> <b>·</b>|<b>·</b>4<b>·</b><b>·</b><b>·</b><b>·</b></span></div>
<div class="hrow" style="top:102px"><span class="off">0060</span><span class="hx">00 28 00 00 00 00 00 00  00 00 00 00 00 34 00 44</span><span class="as"><b>·</b>(<b>·</b><b>·</b><b>·</b><b>·</b><b>·</b><b>·</b> <b>·</b><b>·</b><b>·</b><b>·</b><b>·</b>4<b>·</b>D</span></div>
<div class="hrow" style="top:119px"><span class="off">0070</span><span class="hx">00 00 00 00 00 01 00 05  00 37 00 00 00 00 ec 03</span><span class="as"><b>·</b><b>·</b><b>·</b><b>·</b><b>·</b><b>·</b><b>·</b><b>·</b> <b>·</b>7<b>·</b><b>·</b><b>·</b><b>·</b><b>·</b><b>·</b></span></div>
<div class="hrow" style="top:136px"><span class="off">0080</span><span class="hx">00 00 00 00 5c 00 53 00  79 00 73 00 74 00 65 00</span><span class="as"><b>·</b><b>·</b><b>·</b><b>·</b>\<b>·</b>S<b>·</b> y<b>·</b>s<b>·</b>t<b>·</b>e<b>·</b></span></div>
<div class="hrow" style="top:153px"><span class="off">0090</span><span class="hx">6d 00 33 00 32 00 5c 00  50 00 53 00 45 00 58 00</span><span class="as">m<b>·</b>3<b>·</b>2<b>·</b>\<b>·</b> P<b>·</b>S<b>·</b>E<b>·</b>X<b>·</b></span></div>
<div class="hrow" style="top:170px"><span class="off">00a0</span><span class="hx">45 00 53 00 56 00 43 00  2e 00 45 00 58 00 45 00</span><span class="as">E<b>·</b>S<b>·</b>V<b>·</b>C<b>·</b> .<b>·</b>E<b>·</b>X<b>·</b>E<b>·</b></span></div>
<div class="hrow" style="top:187px"><span class="off">00b0</span><span class="hx">00 00</span><span class="as"><b>·</b><b>·</b></span></div>
</div>
<div class="hdots"></div><div class="vdots"></div>
<div id="status">
 <div class="abs" style="left:14.3px;top:4px;width:13.6px;height:13.8px;border-radius:50%;background:radial-gradient(circle at 45% 25%,#ef9a9a,#e35252 75%)"></div>
<svg style="left:37px;top:3px" width="15" height="16" viewBox="37 888 15 16"><path d="M37.8,889 H48.4 V902.8 H37.8 Z" fill="#f1f1ec"/><path d="M37.8,889 H46 L48.4,891.4 V893.6 H37.8 Z" fill="#3aa0e4"/><path d="M41,893.4 Q41.3,890.6 43.6,890 Q42.7,891.8 43.2,893.6 Z" fill="#fff"/><path d="M39.4,896 H46.8 M39.4,898.4 H46.8 M39.4,900.8 H46.8" stroke="#cfcfc4" stroke-width=".9"/><path d="M49.4,889.2 L51,890.8 L43.4,898.4 L41.2,899.2 L41.9,897 Z" fill="#4a4a48"/><path d="M41.2,899.2 L41.9,897 L43.4,898.4 Z" fill="#111"/></svg>
 <span class="u" style="left:68px">botnet_pcap_file.dat</span>
 <div class="dots" style="left:1106px"></div>
 <span class="u" style="left:1120px;transform:scaleX(.94)">Packets: 54536 · Displayed: 2547 (4.7%)</span>
 <div class="dots" style="left:1591px"></div>
 <span class="u" style="left:1605px">Profile: Default</span>
</div>
<div class="abs" style="left:0;top:912px;width:1712px;height:1px;background:#111217"></div><div class="abs" style="left:0;top:913px;width:1712px;height:1px;background:#7d8586"></div><div class="abs" style="left:0;top:914px;width:1712px;height:1px;background:#24373b"></div><div class="abs" style="left:0;top:913px;width:218px;height:2px;background:#d2d2d2"></div>

</div></body></html>
